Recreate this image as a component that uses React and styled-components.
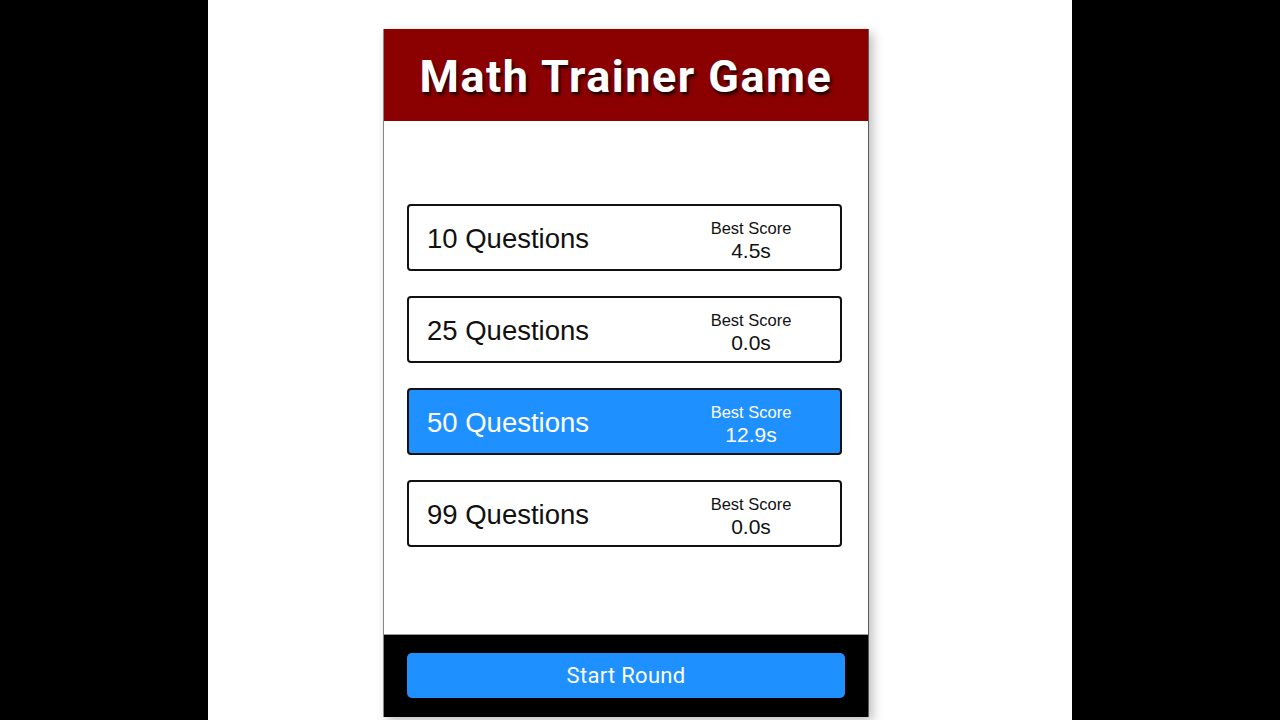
import React, { useState } from "react";
import styled, { createGlobalStyle } from "styled-components";

const GlobalStyle = createGlobalStyle`
  html, body {
    margin: 0;
    padding: 0;
    background: #000;
    height: 100%;
  }
  #root {
    height: 100%;
  }
`;

const Stage = styled.div`
  width: 864px;
  height: 720px;
  margin: 0 auto;
  background: #fff;
  padding-top: 29px;
  box-sizing: border-box;
  overflow: hidden;
`;

const Card = styled.div`
  width: 486px;
  margin-left: 175px;
  border-left: 1px solid #8a8a8a;
  border-right: 1px solid #5a5a5a;
  box-sizing: border-box;
  box-shadow: 4px 4px 10px rgba(0, 0, 0, 0.25);
  background: #fff;
`;

const Header = styled.header`
  height: 92px;
  background: #8b0000;
  display: flex;
  align-items: center;
  justify-content: center;
  padding-top: 2px;
  box-sizing: border-box;
`;

const Title = styled.h1`
  margin: 0;
  color: #fff;
  font-family: "Roboto", "DejaVu Sans", sans-serif;
  font-weight: 700;
  font-size: 45px;
  letter-spacing: 1.5px;
  text-shadow: 2px 3px 3px rgba(0, 0, 0, 0.75);
`;

const Body = styled.div`
  height: 514px;
  display: flex;
  flex-direction: column;
  justify-content: center;
  gap: 25px;
  padding: 0 26px 4px 23px;
  box-sizing: border-box;
  border-bottom: 1px solid #999;
`;

const Option = styled.button`
  height: 67px;
  display: flex;
  align-items: center;
  justify-content: space-between;
  padding: 0 29px 0 18px;
  border: 2px solid #111;
  border-radius: 4px;
  background: ${(p) => (p.$active ? "#1e90ff" : "#fff")};
  color: ${(p) => (p.$active ? "#fff" : "#111")};
  font-family: "Liberation Sans", Arial, sans-serif;
  cursor: pointer;
  text-align: left;
`;

const OptionLabel = styled.span`
  font-size: 27.5px;
  padding-top: 3px;
`;

const ScoreBox = styled.div`
  width: 120px;
  display: flex;
  flex-direction: column;
  align-items: center;
  padding-top: 8px;
`;

const ScoreCaption = styled.span`
  font-size: 16.5px;
  line-height: 19px;
`;

const ScoreValue = styled.span`
  font-size: 21px;
  line-height: 26px;
`;

const Footer = styled.footer`
  height: 82px;
  background: #000;
  display: flex;
  align-items: flex-start;
  padding: 18px 23px 0 23px;
  box-sizing: border-box;
`;

const StartButton = styled.button`
  width: 100%;
  height: 45px;
  border: none;
  border-radius: 5px;
  background: #1e90ff;
  color: #fff;
  font-family: "Roboto", "DejaVu Sans", sans-serif;
  font-size: 22px;
  letter-spacing: 0.3px;
  cursor: pointer;
`;

const rounds = [
  { count: 10, best: "4.5s" },
  { count: 25, best: "0.0s" },
  { count: 50, best: "12.9s" },
  { count: 99, best: "0.0s" },
];

export default function App() {
  const [selected, setSelected] = useState(50);

  return (
    <>
      <GlobalStyle />
      <Stage>
        <Card>
          <Header>
            <Title>Math Trainer Game</Title>
          </Header>
          <Body>
            {rounds.map((r) => (
              <Option
                key={r.count}
                $active={selected === r.count}
                onClick={() => setSelected(r.count)}
              >
                <OptionLabel>{r.count} Questions</OptionLabel>
                <ScoreBox>
                  <ScoreCaption>Best Score</ScoreCaption>
                  <ScoreValue>{r.best}</ScoreValue>
                </ScoreBox>
              </Option>
            ))}
          </Body>
          <Footer>
            <StartButton>Start Round</StartButton>
          </Footer>
        </Card>
      </Stage>
    </>
  );
}
